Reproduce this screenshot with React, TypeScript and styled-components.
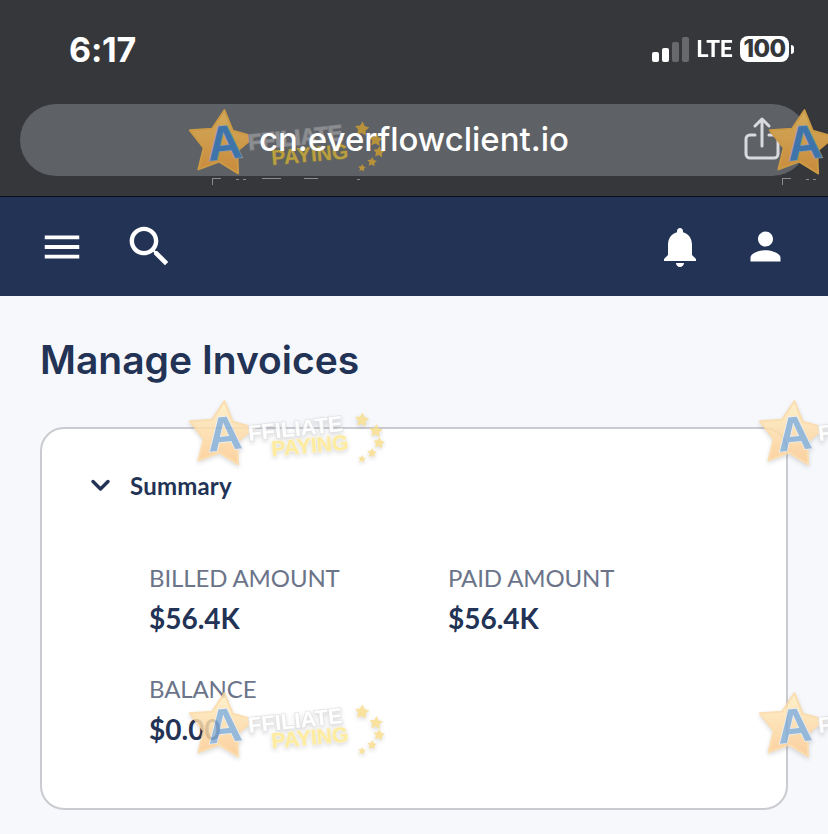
import React from "react";
import styled, { createGlobalStyle } from "styled-components";

const GlobalStyle = createGlobalStyle`
  html, body {
    margin: 0;
    padding: 0;
    background: #f7f8fb;
  }
  * {
    box-sizing: border-box;
  }
`;

const Page = styled.div`
  position: relative;
  width: 828px;
  height: 834px;
  overflow: hidden;
  background: #f7f8fb;
  font-family: Lato, "Open Sans", sans-serif;
`;

const Chrome = styled.header`
  height: 197px;
  padding: 0 20px;
  background: #36373a;
  border-bottom: 1px solid #0b0f1a;
`;

const StatusBar = styled.div`
  height: 104px;
  padding: 0 14px 6px 49px;
  display: flex;
  align-items: center;
  justify-content: space-between;
  color: #ffffff;
`;

const Clock = styled.span`
  font-family: Inter, Roboto, sans-serif;
  font-size: 34px;
  font-weight: 700;
  letter-spacing: -0.2px;
`;

const StatusRight = styled.div`
  display: flex;
  align-items: center;
`;

const Signal = styled.div`
  display: flex;
  align-items: flex-end;
  gap: 3px;
  height: 25px;
  margin-right: 7px;
`;

const SignalBar = styled.span<{ $h: number; $on?: boolean }>`
  width: 7px;
  height: ${(p) => p.$h}px;
  border-radius: 2px;
  background: ${(p) => (p.$on ? "#ffffff" : "#68696c")};
`;

const Lte = styled.span`
  font-family: Roboto, Inter, sans-serif;
  font-size: 23px;
  font-weight: 700;
  margin-right: 7px;
  transform: scaleX(0.97);
`;

const Battery = styled.div`
  position: relative;
  width: 49px;
  height: 26px;
  border-radius: 8px;
  background: #ffffff;
  color: #36373a;
  font-family: Inter, Roboto, sans-serif;
  font-size: 24px;
  font-weight: 800;
  letter-spacing: -0.6px;
  line-height: 26px;
  text-align: center;
`;

const BatteryCap = styled.span`
  width: 3px;
  height: 9px;
  margin-left: 2px;
  border-radius: 0 3px 3px 0;
  background: #ffffff;
`;

const UrlBar = styled.div`
  position: relative;
  height: 72px;
  padding-bottom: 2px;
  border-radius: 36px;
  background: #5e6166;
  display: flex;
  align-items: center;
  justify-content: center;
`;

const UrlText = styled.span`
  position: relative;
  font-family: Inter, Roboto, sans-serif;
  font-size: 33px;
  font-weight: 500;
  color: #ffffff;
`;

const ShareIcon = styled.svg`
  position: absolute;
  top: 12px;
  right: 28px;
  width: 36px;
  height: 46px;
`;

const Nav = styled.nav`
  height: 99px;
  padding: 0 40px 0 39px;
  background: #223355;
  display: flex;
  align-items: center;
  color: #ffffff;
`;

const NavIcon = styled.svg<{ $size: number; $left?: number }>`
  width: ${(p) => p.$size}px;
  height: ${(p) => p.$size}px;
  margin-left: ${(p) => p.$left ?? 0}px;
  fill: currentColor;
  flex: none;
`;

const NavSpacer = styled.div`
  flex: 1;
`;

const Main = styled.main`
  padding: 39px 40px 0;
`;

const Title = styled.h1`
  margin: 0 0 42px;
  font-family: Inter, sans-serif;
  font-size: 39px;
  line-height: 50px;
  font-weight: 600;
  color: #223355;
`;

const Card = styled.section`
  height: 383px;
  padding: 36px 50px 0 48px;
  background: #ffffff;
  border: 2px solid #c9cbd1;
  border-radius: 24px;
`;

const SummaryRow = styled.div`
  display: flex;
  align-items: center;
  gap: 19px;
  height: 40px;
  color: #223355;
`;

const Chevron = styled.svg`
  width: 21px;
  height: 14px;
`;

const SummaryLabel = styled.span`
  font-size: 24px;
  font-weight: 700;
  letter-spacing: 0.2px;
`;

const Metrics = styled.div`
  display: grid;
  grid-template-columns: 299px 1fr;
  row-gap: 36px;
  margin: 58px 0 0 59px;
`;

const Metric = styled.div`
  display: flex;
  flex-direction: column;
  gap: 6px;
`;

const MetricLabel = styled.span`
  font-size: 24px;
  line-height: 30px;
  letter-spacing: -0.12px;
  color: #6b7489;
`;

const MetricValue = styled.span`
  font-size: 28px;
  line-height: 39px;
  font-weight: 700;
  color: #223355;
`;

const Mark = styled.svg<{ $x: number; $y: number; $dim?: boolean }>`
  position: absolute;
  left: ${(p) => p.$x}px;
  top: ${(p) => p.$y}px;
  width: 200px;
  height: 72px;
  overflow: visible;
  opacity: ${(p) => (p.$dim ? 1 : 0.85)};
  filter: ${(p) => (p.$dim ? "none" : "drop-shadow(0 2px 2px rgba(70, 70, 70, 0.22))")};
  pointer-events: none;
`;

const WatermarkClip = styled.div`
  position: absolute;
  inset: 0 -20px;
  overflow: hidden;
`;

const Residue = styled.svg<{ $x: number }>`
  position: absolute;
  left: ${(p) => p.$x}px;
  top: 178px;
  width: 150px;
  height: 8px;
`;

const star = (cx: number, cy: number, r: number) => {
  const pts: string[] = [];
  for (let i = 0; i < 10; i++) {
    const rad = i % 2 === 0 ? r : r * 0.52;
    const a = (Math.PI / 5) * i - Math.PI / 2 + 0.1;
    pts.push(`${(cx + rad * Math.cos(a)).toFixed(1)},${(cy + rad * Math.sin(a)).toFixed(1)}`);
  }
  return pts.join(" ");
};

const smallStars = [
  [174, 20, 7.5],
  [188, 31, 7],
  [191, 43, 6],
  [184, 53, 5],
  [174, 59, 4],
];

const lightColors = {
  id: "star-light",
  starTop: "#fff0c4",
  starBottom: "#fbc88e",
  edge: "#fbd9a4",
  a: "#86add4",
  aEdge: "#e8eef5",
  top: "#ffffff",
  topEdge: "#dcdde0",
  bottom: "#fde88f",
  bottomEdge: "#f9f1cf",
  small: "#f8dd8e",
};

const darkColors = {
  id: "star-dark",
  starTop: "#d2ab5c",
  starBottom: "#c98a3c",
  edge: "#cc9a45",
  a: "#3f74aa",
  aEdge: "#8f9ba8",
  top: "#8b8d91",
  topEdge: "#7a7c80",
  bottom: "#b99f40",
  bottomEdge: "#6d6a55",
  small: "#b8923a",
};

type WatermarkProps = { x: number; y: number; dim?: boolean };

const Watermark = ({ x, y, dim }: WatermarkProps) => {
  const c = dim ? darkColors : lightColors;
  return (
    <Mark $x={x} $y={y} $dim={dim} viewBox="0 0 200 72">
      <defs>
        <linearGradient id={c.id} x1="0" y1="0" x2="0" y2="1">
          <stop offset="0" stopColor={c.starTop} />
          <stop offset="1" stopColor={c.starBottom} />
        </linearGradient>
      </defs>
      <polygon
        points={star(33, 35, 34)}
        fill={`url(#${c.id})`}
        stroke={c.edge}
        strokeWidth="2"
        strokeLinejoin="round"
      />
      <text
        x="38"
        y="50"
        transform="rotate(-6 38 50)"
        fontFamily="Liberation Sans, sans-serif"
        fontWeight="700"
        fontSize="48"
        fill={c.a}
        stroke={c.aEdge}
        strokeWidth="1.5"
        paintOrder="stroke"
        textAnchor="middle"
      >
        A
      </text>
      <text
        x="61"
        y="41"
        transform="rotate(-6 61 41)"
        fontFamily="Liberation Sans, sans-serif"
        fontWeight="700"
        fontSize="22"
        fill={c.top}
        stroke={c.topEdge}
        strokeWidth="1.5"
        paintOrder="stroke"
      >
        FFILIATE
      </text>
      <text
        x="84"
        y="56"
        transform="rotate(-5 84 56)"
        fontFamily="Liberation Sans, sans-serif"
        fontWeight="700"
        fontSize="21"
        fill={c.bottom}
        stroke={c.bottomEdge}
        strokeWidth="1.5"
        paintOrder="stroke"
      >
        PAYING
      </text>
      {smallStars.map(([cx, cy, r]) => (
        <polygon key={cx + cy} points={star(cx, cy, r)} fill={c.small} />
      ))}
    </Mark>
  );
};

// the cropped bottom of the watermark that shows under the url bar
const ChromeResidue = ({ x }: { x: number }) => (
  <Residue $x={x} viewBox="0 0 150 8" fill="#8b8c8f">
    <rect x="0" y="0" width="1" height="7" />
    <rect x="0" y="0" width="9" height="1" />
    <rect x="24" y="1" width="3" height="1" />
    <rect x="31" y="1" width="3" height="1" />
    <rect x="50" y="0" width="19" height="1" />
    <rect x="92" y="0" width="14" height="1" />
    <rect x="145" y="1" width="3" height="1" />
  </Residue>
);

const metrics = [
  { label: "BILLED AMOUNT", value: "$56.4K" },
  { label: "PAID AMOUNT", value: "$56.4K" },
  { label: "BALANCE", value: "$0.00" },
];

export default function App() {
  return (
    <Page>
      <GlobalStyle />
      <Chrome>
        <StatusBar>
          <Clock>6:17</Clock>
          <StatusRight>
            <Signal>
              <SignalBar $h={10} $on />
              <SignalBar $h={14} $on />
              <SignalBar $h={20} />
              <SignalBar $h={25} />
            </Signal>
            <Lte>LTE</Lte>
            <Battery>100</Battery>
            <BatteryCap />
          </StatusRight>
        </StatusBar>
        <UrlBar>
          <ShareIcon viewBox="0 0 36 46" fill="none" stroke="#d9dadd" strokeWidth="3" strokeLinecap="round" strokeLinejoin="round">
            <path d="M11 19H6a4 4 0 0 0-4 4v15a4 4 0 0 0 4 4h24a4 4 0 0 0 4-4V23a4 4 0 0 0-4-4h-5" />
            <path d="M18 30V3M11 10l7-7 7 7" />
          </ShareIcon>
          <WatermarkClip>
            <Watermark x={188} y={5} dim />
            <Watermark x={768} y={5} dim />
          </WatermarkClip>
          <UrlText>cn.everflowclient.io</UrlText>
        </UrlBar>
      </Chrome>
      <ChromeResidue x={212} />
      <ChromeResidue x={782} />
      <Nav>
        <NavIcon $size={46} viewBox="0 0 24 24">
          <path d="M3 18h18v-2H3v2zm0-5h18v-2H3v2zm0-7v2h18V6H3z" />
        </NavIcon>
        <NavIcon $size={53} $left={38} viewBox="0 0 24 24">
          <path d="M15.5 14h-.79l-.28-.27C15.41 12.59 16 11.11 16 9.5 16 5.91 13.09 3 9.5 3S3 5.91 3 9.5 5.91 16 9.5 16c1.61 0 3.09-.59 4.23-1.57l.27.28v.79l5 4.99L20.49 19l-4.99-5zm-6 0C7.01 14 5 11.99 5 9.5S7.01 5 9.5 5 14 7.01 14 9.5 11.99 14 9.5 14z" />
        </NavIcon>
        <NavSpacer />
        <NavIcon $size={48} viewBox="0 0 24 24">
          <path d="M12 22c1.1 0 2-.9 2-2h-4c0 1.1.89 2 2 2zm6-6v-5c0-3.07-1.64-5.64-4.5-6.32V4c0-.83-.67-1.5-1.5-1.5s-1.5.67-1.5 1.5v.68C7.63 5.36 6 7.92 6 11v5l-2 2v1h16v-1l-2-2z" />
        </NavIcon>
        <NavIcon $size={45} $left={39} viewBox="0 0 24 24">
          <path d="M12 12c2.21 0 4-1.79 4-4s-1.79-4-4-4-4 1.79-4 4 1.79 4 4 4zm0 2c-2.67 0-8 1.34-8 4v2h16v-2c0-2.66-5.33-4-8-4z" />
        </NavIcon>
      </Nav>
      <Main>
        <Title>Manage Invoices</Title>
        <Card>
          <SummaryRow>
            <Chevron viewBox="0 0 21 14" fill="none" stroke="currentColor" strokeWidth="3.4" strokeLinecap="round" strokeLinejoin="round">
              <path d="M3 3.5l7.5 7.5L18 3.5" />
            </Chevron>
            <SummaryLabel>Summary</SummaryLabel>
          </SummaryRow>
          <Metrics>
            {metrics.map((m) => (
              <Metric key={m.label}>
                <MetricLabel>{m.label}</MetricLabel>
                <MetricValue>{m.value}</MetricValue>
              </Metric>
            ))}
          </Metrics>
        </Card>
      </Main>
      <Watermark x={188} y={400} />
      <Watermark x={758} y={400} />
      <Watermark x={188} y={692} />
      <Watermark x={758} y={692} />
    </Page>
  );
}
